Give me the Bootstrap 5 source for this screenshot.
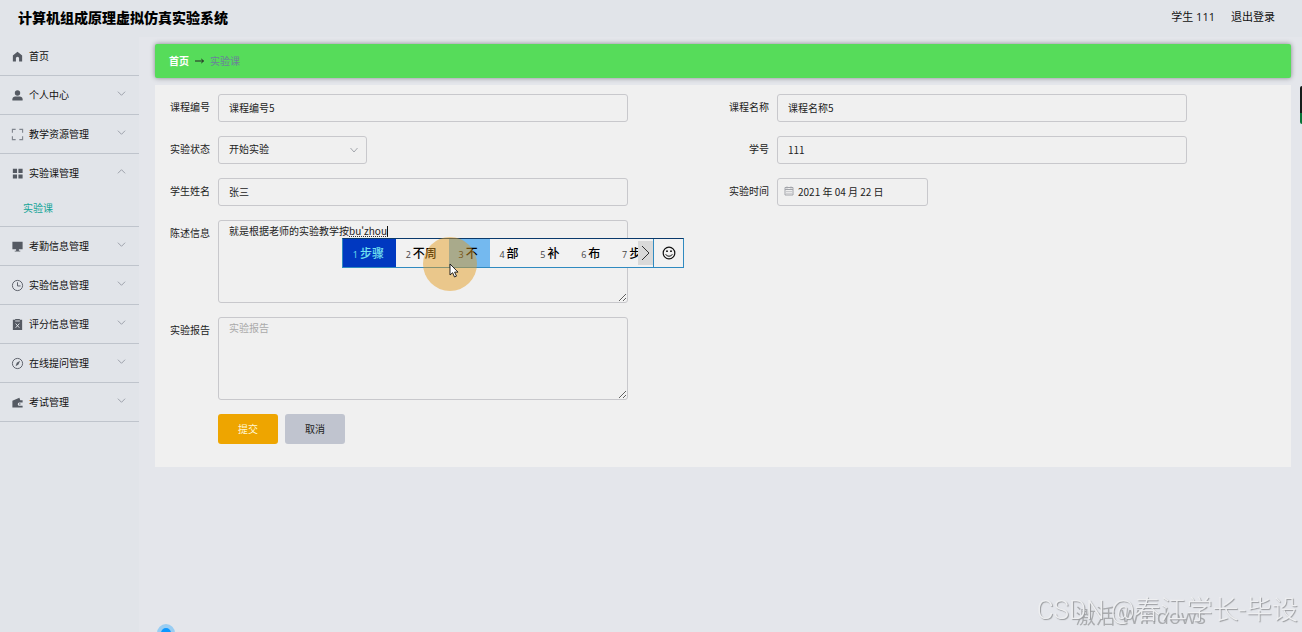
<!DOCTYPE html>
<html lang="zh-CN">
<head>
<meta charset="utf-8">
<meta name="viewport" content="width=device-width, initial-scale=1">
<title>计算机组成原理虚拟仿真实验系统</title>
<link href="https://cdn.jsdelivr.net/npm/bootstrap@5.3.0/dist/css/bootstrap.min.css" rel="stylesheet">
<style>
  body { background: #e4e6eb; color: #111; font: 10px/14px "Noto Sans CJK SC", sans-serif; min-height: 100vh; }
  a { color: inherit; text-decoration: none; }
  .topbar { height: 37px; padding: 0 27px 4px 18px; background: #e1e4e9; }
  .topbar h1 { font-size: 14px; line-height: 20px; font-weight: 900; color: #000; }
  .user-links { font-family: "Open Sans", "Noto Sans CJK SC", sans-serif; font-size: 11px; gap: 16px; }
  .sidebar { width: 139px; background: #e1e4e9; }
  .menu-item { border-bottom: 1px solid #bfc4cc; }
  .menu-link { height: 38px; padding: 0 13px 0 11px; gap: 5px; color: #111; }
  .menu-link .ico { width: 13px; height: 13px; color: #555a63; flex: none; }
  .menu-link .chev { width: 9px; height: 9px; color: #969ba4; margin-bottom: 4px; }
  .menu-link .light { color: #80858e; }
  .sub-link { height: 34px; padding: 0 0 2px 23px; color: #14a598; }
  .content { padding: 7px 11px 0 16px; min-width: 0; }
  .crumbs { height: 34px; padding: 0 14px; gap: 5px; background: #56dc5a; border-radius: 2px; box-shadow: 0 0 5px #85858c; }
  .crumbs .active-page { color: #6b829b; }
  .panel { margin-top: 7px; padding: 9px 9px 23px; background: #f0f0f0; }
  .form-rows { row-gap: 14px; }
  .field { gap: 8px; }
  .field label { width: 46px; line-height: 26px; text-align: right; flex: none; color: #222; white-space: nowrap; }
  .box { max-width: 410px; height: 28px; padding: 0 10px 2px; font-size: 10px; line-height: 14px; color: #222; background-color: #f0f0f0; border: 1px solid #c8c8cc; border-radius: 3px; }
  .box::placeholder { color: #aaa; }
  textarea.box { height: 83px; padding: 3px 10px; }
  select.box { width: 149px; background: #f0f0f0 url("data:image/svg+xml,%3Csvg xmlns='http://www.w3.org/2000/svg' viewBox='0 0 10 10'%3E%3Cpath d='M1.5 3 5 7l3.500-4' fill='none' stroke='%23a4a7ad'/%3E%3C/svg%3E") no-repeat right 7px center / 10px; }
  .date-wrap { width: 151px; }
  .date-wrap .box { padding-left: 20px; }
  .date-wrap svg { left: 7px; top: 8px; width: 10px; height: 10px; color: #a2a4aa; }
  .btn-act { width: 60px; height: 30px; padding: 0; font-size: 10px; line-height: 14px; border: 0; border-radius: 3px; }
  .btn-send { background: #eea500; color: #fff7d5; }
  .btn-cancel { background: #c0c4cf; color: #222; }
  .actions { gap: 7px; padding-left: 54px; }
  .typed { flex: 1 1 0; max-width: 410px; }
  .composing { left: 131px; top: 6px; width: 39px; height: 11px; border-right: 1px solid #111; border-bottom: 1px dotted #333; }
  .ime { left: 124px; top: 18px; width: 342px; height: 30px; border: 1px solid #2f8ac0; border-top-color: #09396b; background: #f2f2f2; z-index: 2; color: #000; }
  .ime button { border: 0; padding: 2px 2px 0 0; background: none; color: inherit; font-family: "Open Sans", "Noto Sans CJK SC", sans-serif; font-weight: 500; font-size: 12px; width: 41px; white-space: nowrap; }
  .ime button small { font-size: 9px; color: #444; margin-right: 2px; }
  .ime .wide-pick { width: 53px; }
  .ime .picked { background: #0038c0; color: #70e0f0; }
  .ime .picked small { color: #70e0f0; }
  .ime .hovered { background: #74b9ef; }
  .ime .hovered small { color: #111; }
  .ime .more { right: 30px; top: 2px; width: 15px; height: 24px; padding: 0; background: #d9d9d9; }
  .ime .face { width: 30px; padding: 0; border-left: 1px solid #2f8ac0; margin-left: auto; background: #f2f2f2; }
  .halo { left: 205px; top: 17px; width: 54px; height: 54px; border-radius: 50%; background: rgba(228,154,30,.48); z-index: 3; }
  .pointer { left: 231px; top: 43px; width: 10px; height: 15px; z-index: 4; }
  .side-widget { right: 0; top: 86px; width: 2px; height: 38px; background: linear-gradient(#151c1a 70%, #087438 70%); border-radius: 2px 0 0 2px; }
  .float-dot { left: 157px; bottom: -10px; width: 18px; height: 18px; border-radius: 50%; border: 4px solid #99cdf2; background: #0c98ff; }
  .activate { right: 96px; bottom: 2px; font: 20px/26px "Open Sans", "Noto Sans CJK SC", sans-serif; color: #aaacaf; }
  .credit { right: 4px; bottom: 4px; font: 26px/36px Roboto, "Noto Sans CJK SC", sans-serif; font-weight: 300; color: #eeeff1; text-shadow: 1px 1px 1px #96989b; }
</style>
<script src="https://cdn.jsdelivr.net/npm/bootstrap@5.3.0/dist/js/bootstrap.bundle.min.js"></script>
</head>
<body class="d-flex flex-column">
<svg class="d-none">
  <symbol id="down" viewBox="0 0 10 10"><path d="M1 3l4 4 4-4" fill="none" stroke="currentColor"/></symbol>
  <symbol id="up" viewBox="0 0 10 10"><path d="M1 7l4-4 4 4" fill="none" stroke="currentColor"/></symbol>
</svg>
<header class="topbar d-flex align-items-center justify-content-between">
  <h1 class="m-0">计算机组成原理虚拟仿真实验系统</h1>
  <nav class="user-links d-flex"><a href="#">学生 111</a><a href="#">退出登录</a></nav>
</header>
<div class="d-flex flex-grow-1">
  <aside class="sidebar flex-shrink-0">
    <ul class="list-unstyled m-0">
      <li class="menu-item"><a class="menu-link d-flex align-items-center" href="#"><svg class="ico" viewBox="0 0 14 14"><path d="M7 2l5 4v6.500H8.700V9a1.700 1.700 0 0 0-3.400 0v3.500H2V6z" fill="currentColor"/></svg>首页</a></li>
      <li class="menu-item"><a class="menu-link d-flex align-items-center" href="#"><svg class="ico" viewBox="0 0 14 14"><circle cx="7" cy="4.300" r="2.900" fill="currentColor"/><path d="M1.500 12.500V11c0-2 1.500-3 3-3h5c1.500 0 3 1 3 3v1.500z" fill="currentColor"/></svg>个人中心<svg class="chev ms-auto"><use href="#down"/></svg></a></li>
      <li class="menu-item"><a class="menu-link d-flex align-items-center" href="#"><svg class="ico light" viewBox="0 0 14 14"><path d="M1.500 5V1.500H5M9 1.500h3.500V5M12.500 9v3.500H9M5 12.500H1.500V9" fill="none" stroke="currentColor" stroke-width="1.200"/></svg>教学资源管理<svg class="chev ms-auto"><use href="#down"/></svg></a></li>
      <li class="menu-item"><a class="menu-link d-flex align-items-center" href="#"><svg class="ico" viewBox="0 0 14 14"><path d="M2 2h4.500v4.500H2zM8 2h4.500v4.500H8zM2 8h4.500v4.500H2zM8 8h4.500v4.500H8z" fill="currentColor"/></svg>实验课管理<svg class="chev ms-auto"><use href="#up"/></svg></a>
        <a class="sub-link d-flex align-items-center" href="#">实验课</a></li>
      <li class="menu-item"><a class="menu-link d-flex align-items-center" href="#"><svg class="ico" viewBox="0 0 14 14"><path d="M1.500 2h11v8h-4v1.500H10v.800H4v-.800h1.500V10h-4z" fill="currentColor"/></svg>考勤信息管理<svg class="chev ms-auto"><use href="#down"/></svg></a></li>
      <li class="menu-item"><a class="menu-link d-flex align-items-center" href="#"><svg class="ico" viewBox="0 0 14 14"><circle cx="7" cy="7" r="5.500" fill="none" stroke="currentColor"/><path d="M7 3.500V7.500h3.300" fill="none" stroke="currentColor"/></svg>实验信息管理<svg class="chev ms-auto"><use href="#down"/></svg></a></li>
      <li class="menu-item"><a class="menu-link d-flex align-items-center" href="#"><svg class="ico" viewBox="0 0 14 14"><path d="M2 2h2.500V1h5v1H12v11H2z" fill="currentColor"/><path d="M4.500 3.200h5M5 6l4 4.500M9 6l-4 4.500" stroke="#e1e4e9" fill="none"/></svg>评分信息管理<svg class="chev ms-auto"><use href="#down"/></svg></a></li>
      <li class="menu-item"><a class="menu-link d-flex align-items-center" href="#"><svg class="ico" viewBox="0 0 14 14"><circle cx="7" cy="7" r="5.500" fill="none" stroke="currentColor"/><path d="M9.800 4L8 8.200 5 10l1.200-3.700z" fill="currentColor"/></svg>在线提问管理<svg class="chev ms-auto"><use href="#down"/></svg></a></li>
      <li class="menu-item"><a class="menu-link d-flex align-items-center" href="#"><svg class="ico" viewBox="0 0 14 14"><path d="M1.500 5L9 2l1 2.500h2.500V7H9a1.700 1.700 0 0 0 0 3.500h3.500v2h-11z" fill="currentColor"/><circle cx="9.500" cy="8.700" r=".8" fill="currentColor"/></svg>考试管理<svg class="chev ms-auto"><use href="#down"/></svg></a></li>
    </ul>
  </aside>
  <main class="content flex-grow-1">
    <nav class="crumbs d-flex align-items-center" aria-label="breadcrumb"><a class="fw-bold text-white" href="#">首页</a><svg width="11" height="8" viewBox="0 0 11 8"><path d="M1 4h8.500M7.300 2L9.500 4 7.300 6" fill="none" stroke="#222"/></svg><span class="active-page">实验课</span></nav>
    <form class="panel">
      <div class="row gx-0 form-rows">
        <div class="col-6 field d-flex"><label for="cno">课程编号</label><input id="cno" class="form-control box" value="课程编号5"></div>
        <div class="col-6 field d-flex"><label for="cname">课程名称</label><input id="cname" class="form-control box" value="课程名称5"></div>
        <div class="col-6 field d-flex"><label for="state">实验状态</label><select id="state" class="form-select box"><option>开始实验</option></select></div>
        <div class="col-6 field d-flex"><label for="sno">学号</label><input id="sno" class="form-control box" value="111"></div>
        <div class="col-6 field d-flex"><label for="sname">学生姓名</label><input id="sname" class="form-control box" value="张三"></div>
        <div class="col-6 field d-flex"><label for="date">实验时间</label><div class="date-wrap position-relative"><input id="date" class="form-control box" value="2021 年 04 月 22 日"><svg class="position-absolute" viewBox="0 0 10 10"><path d="M1 1.500h8v7.500H1zM1 3.500h8M3 .5v2M7 .5v2" fill="none" stroke="currentColor"/><path d="M2.500 5.500h5M2.500 7.300h5" stroke="currentColor" stroke-dasharray="1 1"/></svg></div></div>
        <div class="col-6 field d-flex"><label for="desc">陈述信息</label>
          <div class="typed position-relative">
            <textarea id="desc" class="form-control box">就是根据老师的实验教学按bu'zhou</textarea>
            <div class="composing position-absolute"></div>
            <div class="ime position-absolute d-flex">
              <button type="button" class="wide-pick picked"><small>1</small>步骤</button>
              <button type="button" class="wide-pick"><small>2</small>不周</button>
              <button type="button" class="hovered"><small>3</small>不</button>
              <button type="button"><small>4</small>部</button>
              <button type="button"><small>5</small>补</button>
              <button type="button"><small>6</small>布</button>
              <button type="button"><small>7</small>步</button>
              <button type="button" class="more position-absolute" aria-label="更多"><svg class="d-block mx-auto" width="9" height="16" viewBox="0 0 9 16"><path d="M1 1l7 7-7 7" fill="none" stroke="#333"/></svg></button>
              <button type="button" class="face" aria-label="表情"><svg class="d-block mx-auto" width="14" height="14" viewBox="0 0 14 14"><circle cx="7" cy="7" r="5.800" fill="none" stroke="#111" stroke-width="1.200"/><circle cx="5" cy="5.200" r=".9"/><circle cx="9" cy="5.200" r=".9"/><path d="M3.700 8.300c1.200 2.500 5.400 2.500 6.600 0" fill="none" stroke="#111"/></svg></button>
            </div>
            <div class="halo position-absolute"></div>
            <svg class="pointer position-absolute" viewBox="0 0 10 15"><path d="M1 1v11l2.600-2.300L5.500 14l2-.9-1.900-4H9z" fill="#fff" stroke="#111" stroke-width=".9"/></svg>
          </div>
        </div>
        <div class="col-12 field d-flex"><label for="report">实验报告</label><textarea id="report" class="form-control box" placeholder="实验报告"></textarea></div>
        <div class="col-12 actions d-flex"><button type="submit" class="btn btn-act btn-send">提交</button><button type="button" class="btn btn-act btn-cancel">取消</button></div>
      </div>
    </form>
  </main>
</div>
<div class="side-widget position-fixed"></div>
<div class="float-dot position-fixed"></div>
<div class="activate position-fixed">激活 Windows</div>
<div class="credit position-fixed">CSDN @春江学长-毕设</div>
</body>
</html>
